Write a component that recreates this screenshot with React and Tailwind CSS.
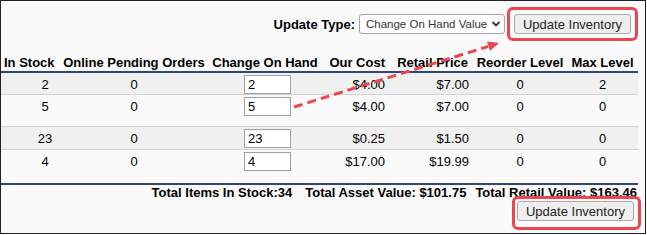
import React from 'react';

const rows = [
    { stock: '2', pending: '0', change: '2', cost: '$4.00', retail: '$7.00', reorder: '0', max: '2', shade: true, h: 'h-[22px]' },
    { stock: '5', pending: '0', change: '5', cost: '$4.00', retail: '$7.00', reorder: '0', max: '0', shade: false, h: 'h-[32px]' },
    { stock: '23', pending: '0', change: '23', cost: '$0.25', retail: '$1.50', reorder: '0', max: '0', shade: true, h: 'h-[23px]' },
    { stock: '4', pending: '0', change: '4', cost: '$17.00', retail: '$19.99', reorder: '0', max: '0', shade: false, h: 'h-[33px]', last: true },
];

const cols = 'grid grid-cols-[58px_150px_112px_70px_82px_94px_71px]';

const UpdateButton = ({ className = '' }) => (
    <button className={`relative z-10 h-[20px] px-[8px] bg-[#efefef] border border-[#a9a9a9] rounded-[3px] text-[13px] leading-[15px] text-[#222] ${className}`}>
        Update Inventory
    </button>
);

const App = () => {
    return (
        <div
            className="relative w-[646px] h-[234px] border border-[#222] bg-[#fafafa] text-[13px] leading-[15px] text-black overflow-hidden"
            style={{ fontFamily: '"Liberation Sans", Arial, sans-serif' }}
        >
            {/* top toolbar */}
            <div className="flex items-center justify-end pt-[13px] pr-[14px]">
                <span className="font-bold">Update Type:</span>
                <div className="ml-[4px] w-[146px] h-[20px] bg-white border border-[#a5a5a5] rounded-[3px] flex items-center justify-between pl-[6px] pr-[3px] text-[#333] text-[11.5px] whitespace-nowrap">
                    <span>Change On Hand Value</span>
                    <svg width="10" height="8" viewBox="0 0 10 8" className="text-[#333]">
                        <path d="M1.5 2 L5 5.5 L8.5 2" fill="none" stroke="currentColor" strokeWidth="1.8" />
                    </svg>
                </div>
                <UpdateButton className="ml-[9px]" />
            </div>

            {/* table */}
            <div className="w-[637px] mt-[15px]">
                <div className={`${cols} h-[24px] items-end pb-[1px] font-bold border-b-2 border-[#33447a]`}>
                    <div className="pl-[3px]">In Stock</div>
                    <div className="text-center">Online Pending Orders</div>
                    <div className="text-center">Change On Hand</div>
                    <div className="text-right pr-[6px]">Our Cost</div>
                    <div className="text-right pr-[5px]">Retail Price</div>
                    <div className="text-center">Reorder Level</div>
                    <div className="text-center">Max Level</div>
                </div>

                {rows.map((r, i) => (
                    <div
                        key={i}
                        className={`${r.h} ${r.shade ? 'bg-[#f0f0f0]' : ''} ${r.last ? '' : 'border-b border-[#d3d3d3]'}`}
                    >
                        <div className={`${cols} h-[22px] items-center`}>
                            <div className="text-center pl-[30px]">{r.stock}</div>
                            <div className="text-center">{r.pending}</div>
                            <div>
                                <input
                                    type="text"
                                    defaultValue={r.change}
                                    className="ml-[35px] block w-[47px] h-[19px] bg-white border border-[#a0a0a0] px-[3px] text-[13px] leading-[15px] outline-none"
                                />
                            </div>
                            <div className="text-right pr-[6px]">{r.cost}</div>
                            <div className="text-right pr-[4px]">{r.retail}</div>
                            <div className="text-center">{r.reorder}</div>
                            <div className="text-center">{r.max}</div>
                        </div>
                    </div>
                ))}

                <div className="border-t-2 border-[#33447a]" />
            </div>

            {/* totals */}
            <div className="flex justify-end pr-[8px] h-[15px] font-bold whitespace-nowrap">
                <span>Total Items In Stock:34</span>
                <span className="ml-[13px]">Total Asset Value: $101.75</span>
                <span className="ml-[9px]">Total Retail Value: $163.46</span>
            </div>

            <div className="flex justify-end pr-[11px] mt-[1px]">
                <UpdateButton />
            </div>

            {/* annotation overlays */}
            <div className="absolute left-[506px] top-[6px] w-[131px] h-[34px] border-[3px] border-[#ec4651] rounded-[6px]" />
            <div className="absolute left-[511px] top-[195px] w-[129px] h-[34px] border-[3px] border-[#ec4651] rounded-[6px] bg-[#fafafa]" />
            <svg className="absolute left-[-1px] top-[-1px] pointer-events-none" width="647" height="235" viewBox="0 0 647 235">
                <line x1="294" y1="107" x2="488" y2="46.5" stroke="#ec4651" strokeWidth="3" strokeDasharray="9 5" />
                <polygon points="499,43 490,51 487,41.4" fill="#ec4651" />
            </svg>
        </div>
    );
};

export default App;
